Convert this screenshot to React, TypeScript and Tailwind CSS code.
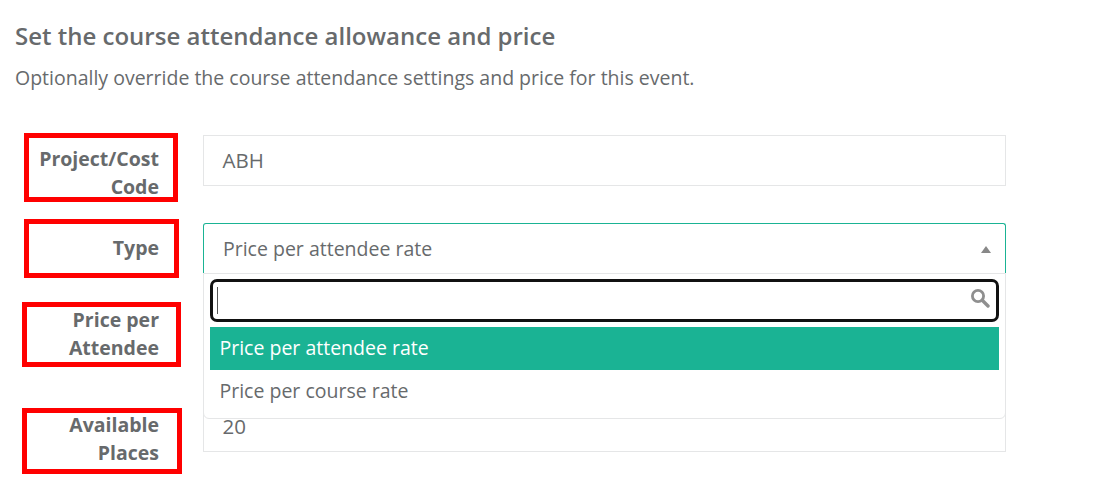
import React from "react";

function Annot({ className }: { className: string }) {
  return <div className={"absolute border-[5px] border-[#ff0000] pointer-events-none " + className} />;
}

function Row({ label, children, className, annot, labelClass = "pt-[10px]" }: { label: React.ReactNode; children: React.ReactNode; className: string; annot: string; labelClass?: string }) {
  return (
    <div className={"relative flex " + className}>
      <label className={"w-[144px] text-right text-[19.5px] leading-[28px] font-bold text-[#676a6c] shrink-0 " + labelClass}>{label}</label>
      <div className="ml-[44px] w-[803px] shrink-0 relative">{children}</div>
      <Annot className={annot} />
    </div>
  );
}

function Field({ value }: { value: string }) {
  return (
    <div className="h-[51px] border border-[#e5e6e7] bg-white pl-[18.5px] flex items-center text-[20.5px] text-[#676a6c]">{value}</div>
  );
}

export default function App() {
  return (
    <div className="w-[1094px] h-[482px] overflow-hidden bg-white pl-[15px] pt-[20px] text-[#676a6c] font-['Open_Sans',sans-serif]">
      <h3 className="text-[24px] leading-[32px] font-semibold whitespace-nowrap">Set the course attendance allowance and price</h3>
      <p className="mt-[13px] text-[19.5px] leading-[26px] whitespace-nowrap">Optionally override the course attendance settings and price for this event.</p>
      <div className="mt-[44px]">
        <Row label="Project/Cost Code" className="h-[66px] mb-[22px]" annot="left-[9px] top-[-2px] w-[154px] h-[69px]">
          <Field value="ABH" />
        </Row>
        <Row label="Type" labelClass="pt-[11px]" className="h-[51px] mb-[22px] z-10" annot="left-[9px] top-[-4px] w-[155px] h-[59px]">
          <div className="h-[50px] border border-[#1ab394] border-b-0 rounded-t-[3px] bg-white pl-[19px] flex items-center text-[19.5px] text-[#676a6c] relative">
            Price per attendee rate
            <span className="absolute right-[14px] top-[22px] w-0 h-0 border-x-[5px] border-x-transparent border-b-[7px] border-b-[#888888]" />
          </div>
          <div className="absolute left-0 right-0 top-[50px] h-[146px] bg-white border border-[#e5e6e7] rounded-b-[6px] px-[6px] pt-[5px]">
            <div className="relative h-[43px] border-[3px] border-[#111111] rounded-[7px] bg-white">
              <span className="absolute left-[4px] top-[5px] w-px h-[27px] bg-[#555555]" />
              <svg className="absolute right-[6px] top-[6px]" width="20" height="20" viewBox="0 0 20 20" fill="none" stroke="#8f8f8f">
                <circle cx="8" cy="8" r="5.6" strokeWidth="2.8" />
                <path d="M12.5 12.5 L18 18" strokeWidth="3.4" strokeLinecap="round" />
              </svg>
            </div>
            <div className="mt-[5px] h-[43px] bg-[#1ab394] text-white pl-[9.5px] pb-[2px] flex items-center text-[19.5px]">Price per attendee rate</div>
            <div className="h-[43px] text-[#676a6c] pl-[9.5px] pb-[2px] flex items-center text-[19.5px]">Price per course rate</div>
          </div>
        </Row>
        <Row label="Price per Attendee" className="h-[66px] mb-[39px]" annot="left-[7px] top-[6px] w-[159px] h-[65px]">
          <Field value="" />
        </Row>
        <Row label="Available Places" className="h-[66px]" annot="left-[7px] top-[7px] w-[160px] h-[66px]">
          <Field value="20" />
        </Row>
      </div>
    </div>
  );
}
